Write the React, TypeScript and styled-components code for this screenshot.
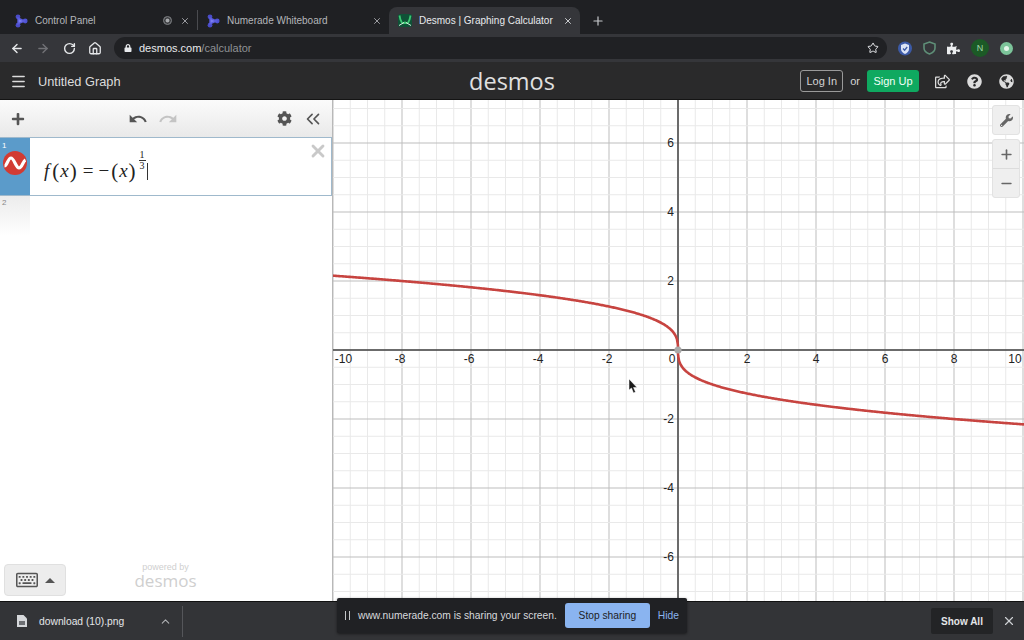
import React from 'react';
import styled, { createGlobalStyle } from 'styled-components';
import { ChevronUp, Home, Menu, Plus, RotateCw, Star, X, ArrowLeft, ArrowRight, ChevronsLeft, Minus } from 'lucide-react';
import {
  FaCog,
  FaGlobeAmericas,
  FaLock,
  FaPlus,
  FaPuzzlePiece,
  FaQuestionCircle,
  FaRegKeyboard,
  FaRegShareSquare,
  FaWrench,
} from 'react-icons/fa';
import { MdRedo, MdUndo } from 'react-icons/md';

const GlobalStyle = createGlobalStyle`
  html, body {
    margin: 0;
    padding: 0;
    height: 640px;
    overflow: hidden;
    font-family: "Liberation Sans", Arial, sans-serif;
  }
`;

const Page = styled.div`
  position: relative;
  width: 1024px;
  height: 640px;
  display: flex;
  flex-direction: column;
  overflow: hidden;
  background: #fff;
`;

/* browser chrome */
const TabStrip = styled.div`
  height: 34px;
  flex: none;
  background: #1f2023;
  display: flex;
  align-items: flex-end;
  padding-left: 6px;
`;

const Tab = styled.div<{ $active?: boolean; $width: number }>`
  width: ${(p) => p.$width}px;
  height: 27px;
  flex: none;
  box-sizing: border-box;
  display: flex;
  align-items: center;
  gap: 7px;
  padding: 0 7px 0 9px;
  border-radius: 8px 8px 0 0;
  background: ${(p) => (p.$active ? '#35363a' : 'transparent')};
  color: ${(p) => (p.$active ? '#e8eaed' : '#b4b6ba')};
  font-size: 10px;
  white-space: nowrap;
`;

const TabTitle = styled.span`
  flex: 1;
  overflow: hidden;
`;

const TabDivider = styled.div`
  width: 1px;
  height: 20px;
  margin: 0 0 4px 0;
  background: #4a4b4f;
  flex: none;
`;

const NewTab = styled.div`
  height: 27px;
  margin-left: 11px;
  display: flex;
  align-items: center;
  color: #c8cacd;
`;

const RecordDot = styled.div`
  width: 9px;
  height: 9px;
  border-radius: 50%;
  background: #a8aaad;
  border: 1px solid #6c6e72;
  box-sizing: border-box;
  box-shadow: inset 0 0 0 1.5px #3a3b3e;
  margin-right: 1px;
`;

const BrowserBar = styled.div`
  height: 28px;
  flex: none;
  background: #35363a;
  display: flex;
  align-items: center;
  padding-left: 10px;
  color: #d5d7da;
`;

const NavButton = styled.div<{ $dim?: boolean; $gap?: number }>`
  width: 14px;
  display: flex;
  justify-content: center;
  margin-right: ${(p) => p.$gap ?? 12}px;
  color: ${(p) => (p.$dim ? '#717276' : '#e6e8ea')};
`;

const AddressBar = styled.div`
  width: 773px;
  height: 22px;
  margin-left: 1px;
  box-sizing: border-box;
  border-radius: 11px;
  background: #202124;
  display: flex;
  align-items: center;
  padding: 0 8px 0 10px;
  font-size: 11px;
  color: #e8eaed;
  gap: 7px;
`;

const Url = styled.span`
  flex: 1;
`;

const UrlPath = styled.span`
  color: #8f9195;
`;

const Extensions = styled.div`
  display: flex;
  align-items: center;
  gap: 11px;
  margin-left: 11px;
  color: #eceef0;
`;

const ProfileBadge = styled.div`
  width: 18px;
  height: 18px;
  border-radius: 50%;
  background: #1c5a26;
  color: #9fd8a6;
  font-size: 9px;
  display: flex;
  align-items: center;
  justify-content: center;
`;

const UpdateDot = styled.div`
  width: 13px;
  height: 13px;
  border-radius: 50%;
  background: #7cc49a;
  display: flex;
  align-items: center;
  justify-content: center;
  &::after {
    content: '';
    width: 5px;
    height: 5px;
    border-radius: 50%;
    background: #e4f5ea;
  }
`;

/* desmos header */
const Header = styled.header`
  height: 38px;
  flex: none;
  box-sizing: border-box;
  background: #2a2a2b;
  border-bottom: 1px solid #141414;
  display: grid;
  grid-template-columns: 1fr auto 1fr;
  align-items: center;
  padding: 0 10px;
  color: #f0f0f0;
`;

const HeaderLeft = styled.div`
  display: flex;
  align-items: center;
  gap: 11px;
  font-size: 12.8px;
  color: #dcdcdc;
`;

const Logo = styled.div`
  font-family: "Open Sans", sans-serif;
  font-weight: 400;
  font-size: 23.5px;
  line-height: 38px;
  color: #e0e0e0;
`;

const HeaderRight = styled.div`
  display: flex;
  align-items: center;
  justify-content: flex-end;
  font-size: 11px;
  color: #d4d4d4;
`;

const LoginButton = styled.div`
  box-sizing: border-box;
  width: 43px;
  height: 22px;
  border: 1px solid #9a9a9a;
  border-radius: 3px;
  display: flex;
  align-items: center;
  justify-content: center;
`;

const OrLabel = styled.span`
  margin: 0 7px;
`;

const SignupButton = styled.div`
  width: 52px;
  height: 22px;
  border-radius: 3px;
  background: #0fa960;
  color: #f2fff8;
  display: flex;
  align-items: center;
  justify-content: center;
  margin-right: 16px;
`;

const HeaderIcons = styled.div`
  display: flex;
  align-items: center;
  gap: 17px;
  color: #dcdcdc;
`;

/* main area */
const Main = styled.main`
  flex: 1;
  min-height: 0;
  display: flex;
`;

const Sidebar = styled.aside`
  position: relative;
  width: 333px;
  flex: none;
  box-sizing: border-box;
  border-right: 1px solid #b8b8b8;
  background: #fff;
  display: flex;
  flex-direction: column;
`;

const ListToolbar = styled.div`
  height: 37px;
  flex: none;
  box-sizing: border-box;
  padding: 0 8px 0 11px;
  background: linear-gradient(#fbfbfb, #e9e9e9);
  display: grid;
  grid-template-columns: 1fr auto 1fr;
  align-items: center;
  color: #555;
`;

const UndoGroup = styled.div`
  display: flex;
  gap: 10px;
  margin-right: 30px;
`;

const RedoIcon = styled(MdRedo)`
  color: #c4c4c4;
`;

const ToolbarEnd = styled.div`
  display: flex;
  justify-content: flex-end;
  align-items: center;
  gap: 10px;
`;

const ExpressionRow = styled.div`
  height: 59px;
  flex: none;
  box-sizing: border-box;
  border: 1px solid #9fb9cc;
  border-left: none;
  display: flex;
  position: relative;
`;

const RowTab = styled.div`
  width: 30px;
  flex: none;
  box-sizing: border-box;
  background: #5b9bca;
  color: #fff;
  font-size: 8px;
  padding: 3px 0 0 2px;
  display: flex;
  flex-direction: column;
`;

const GraphIcon = styled.svg`
  margin: 1px 0 0 0px;
`;

const MathLine = styled.div`
  margin: 11px 0 0 14px;
  display: flex;
  align-items: center;
  font-family: "Liberation Serif", "DejaVu Serif", serif;
  font-size: 19px;
  color: #222;
  height: 44px;
`;

const Var = styled.i<{ $left?: number; $right?: number }>`
  margin: 0 ${(p) => p.$right ?? 1}px 0 ${(p) => p.$left ?? 1}px;
`;

const Paren = styled.span`
  font-size: 21px;
  font-weight: 300;
`;

const Operator = styled.span<{ $left?: number; $right?: number }>`
  margin: 0 ${(p) => p.$right ?? 0}px 0 ${(p) => p.$left ?? 0}px;
`;

const Fraction = styled.span`
  display: inline-flex;
  flex-direction: column;
  align-items: center;
  font-size: 10px;
  line-height: 10px;
  margin: -22px 0 0 3px;
`;

const FractionTop = styled.span`
  border-bottom: 1px solid #333;
  padding: 0 1px;
`;

const Caret = styled.span`
  width: 1px;
  height: 17px;
  background: #333;
  margin-left: 1px;
`;

const RemoveButton = styled.div`
  position: absolute;
  top: 3px;
  right: 3px;
  color: #c9c9c9;
  display: flex;
`;

const EmptyRow = styled.div`
  width: 30px;
  height: 40px;
  flex: none;
  box-sizing: border-box;
  padding: 2px 0 0 2px;
  font-size: 8px;
  color: #888;
  background: linear-gradient(#ececec, #fff);
`;

const KeyboardButton = styled.div`
  position: absolute;
  left: 4px;
  bottom: 5px;
  width: 62px;
  height: 32px;
  box-sizing: border-box;
  background: #ededed;
  border: 1px solid #e0e0e0;
  border-radius: 4px;
  display: flex;
  align-items: center;
  justify-content: center;
  gap: 7px;
  color: #555;
`;

const CaretUp = styled.div`
  width: 0;
  height: 0;
  border-left: 5px solid transparent;
  border-right: 5px solid transparent;
  border-bottom: 5px solid #555;
`;

const PoweredBy = styled.div`
  position: absolute;
  left: 133px;
  bottom: 11px;
  width: 65px;
  display: flex;
  flex-direction: column;
  align-items: center;
  color: #cfcfcf;
`;

const PoweredLabel = styled.span`
  font-size: 9px;
  line-height: 9px;
`;

const PoweredLogo = styled.span`
  font-family: "Open Sans", sans-serif;
  font-weight: 400;
  font-size: 17px;
  line-height: 18px;
`;

/* graph */
const GraphPane = styled.section`
  position: relative;
  flex: 1;
  min-width: 0;
  overflow: hidden;
  background: #fff;
`;

const GraphSvg = styled.svg`
  display: block;
`;

const AxisLabel = styled.text`
  font-family: "Liberation Sans", Arial, sans-serif;
  font-size: 12px;
  fill: #222;
`;

const GraphControls = styled.div`
  position: absolute;
  top: 5px;
  right: 4px;
  width: 28px;
  display: flex;
  flex-direction: column;
  gap: 4px;
  color: #666;
`;

const ControlGroup = styled.div`
  background: #efefef;
  border: 1px solid #e2e2e2;
  border-radius: 3px;
  display: flex;
  flex-direction: column;
`;

const ControlButton = styled.div<{ $divider?: boolean }>`
  height: 28px;
  display: flex;
  align-items: center;
  justify-content: center;
  border-top: ${(p) => (p.$divider ? '1px solid #dcdcdc' : 'none')};
`;

/* download bar */
const DownloadBar = styled.footer`
  height: 39px;
  flex: none;
  box-sizing: border-box;
  background: #333437;
  border-top: 1px solid #111;
  display: flex;
  align-items: center;
  color: #e4e6e8;
  font-size: 10.3px;
`;

const DownloadItem = styled.div`
  width: 183px;
  height: 31px;
  box-sizing: border-box;
  border-right: 1px solid #55565a;
  display: flex;
  align-items: center;
  padding: 0 10px 0 17px;
`;

const DownloadName = styled.span`
  flex: 1;
  margin-left: 12px;
`;

const DownloadChevron = styled(ChevronUp)`
  color: #b0b2b5;
`;

const ShowAll = styled.div`
  margin-left: auto;
  width: 62px;
  height: 26px;
  background: #232426;
  border-radius: 2px;
  font-weight: 700;
  font-size: 10px;
  display: flex;
  align-items: center;
  justify-content: center;
`;

const CloseDownloads = styled.div`
  margin: 0 8px 0 9px;
  display: flex;
  color: #cfd1d4;
`;

const ShareNotice = styled.div`
  position: absolute;
  left: 337px;
  top: 598px;
  width: 350px;
  height: 35px;
  box-sizing: border-box;
  background: #202124;
  box-shadow: 0 1px 3px rgba(0, 0, 0, 0.5);
  border-radius: 2px;
  display: flex;
  align-items: center;
  padding-left: 8px;
  font-size: 10.25px;
  color: #d8dadd;
  white-space: nowrap;
`;

const PauseMark = styled.span`
  width: 5px;
  height: 9px;
  flex: none;
  box-sizing: border-box;
  border-left: 1px solid #c4c6c9;
  border-right: 1px solid #c4c6c9;
  margin-right: 8px;
`;

const StopButton = styled.div`
  width: 85px;
  height: 25px;
  flex: none;
  margin-left: 8px;
  border-radius: 3px;
  background: #8ab4f0;
  color: #202124;
  display: flex;
  align-items: center;
  justify-content: center;
`;

const HideLink = styled.span`
  margin-left: 8px;
  color: #8ab4f0;
`;

const Cursor = styled.svg`
  position: absolute;
  left: 628px;
  top: 379px;
`;

const NumeradeIcon = () => (
  <svg width="13" height="14" viewBox="0 0 13 14">
    <circle cx="3" cy="2.8" r="2.4" fill="#4a4cc8" />
    <circle cx="3" cy="11.2" r="2.4" fill="#4a4cc8" />
    <circle cx="10.2" cy="7" r="2.4" fill="#4f52d4" />
    <path d="M3 4 L9.5 7 L3 10 Z" fill="#7a7cf0" stroke="#5a5cdc" strokeWidth="1.4" />
  </svg>
);

const DesmosFavicon = () => (
  <svg width="14" height="13" viewBox="0 0 14 13" fill="none">
    <rect width="14" height="13" rx="2" fill="#0f5237" />
    <path d="M1.5 1.5 C2.5 8 4.5 10.5 7 8.5 C9.5 10.5 11.5 8 12.5 1.5" stroke="#3cc873" strokeWidth="1.8" />
    <path d="M1 11.5 L6 8.5 M13 11.5 L8 8.5" stroke="#d8f2df" strokeWidth="1" />
  </svg>
);

const ShieldBlue = () => (
  <svg width="14" height="15" viewBox="0 0 14 15">
    <circle cx="7" cy="7.5" r="7" fill="#3c5aa6" />
    <path d="M7 2.5 L11 4 V8 C11 10.5 9 12 7 13 C5 12 3 10.5 3 8 V4 Z" fill="#dbe4f7" />
    <path d="M5 7.5 L6.6 9.2 L9.2 6" stroke="#3c5aa6" strokeWidth="1.3" fill="none" />
  </svg>
);

const ShieldOutline = () => (
  <svg width="13" height="14" viewBox="0 0 13 14" fill="none">
    <path d="M6.5 1 L12 3 V7 C12 10 9.5 12 6.5 13 C3.5 12 1 10 1 7 V3 Z" stroke="#5f8f78" strokeWidth="1.6" />
  </svg>
);

// major lines every 2 units, minor every half unit
const SCALE = 34.5;
const W = 691;
const H = 501;
const OX = 345;
const OY = 250;

const gridPositions = (origin: number, size: number, step: number) => {
  const out: { pos: number; index: number }[] = [];
  const start = Math.ceil(-origin / step);
  const end = Math.floor((size - origin) / step);
  for (let i = start; i <= end; i++) out.push({ pos: origin + i * step, index: i });
  return out;
};

const curvePath = () => {
  const pts: string[] = [];
  for (let px = 0; px <= W; px += 1) {
    const x = (px - OX) / SCALE;
    const y = -Math.cbrt(x);
    pts.push(`${px},${(OY - y * SCALE).toFixed(2)}`);
  }
  // the cube root is near vertical at the origin
  const near = [-0.004, -0.001, -0.0002, 0, 0.0002, 0.001, 0.004].map(
    (x) => `${(OX + x * SCALE).toFixed(2)},${(OY + Math.cbrt(x) * SCALE).toFixed(2)}`,
  );
  const left = pts.slice(0, OX);
  const right = pts.slice(OX + 1);
  return `M${[...left, ...near, ...right].join(' L')}`;
};

// labels at the pane edges are pulled inside, minus signs hang to the left
const xLabelPos = (v: number) => {
  if (v === -10) return 10.5;
  if (v === 10) return 682;
  return OX + v * SCALE - (v < 0 ? 2 : 0);
};

const Graph = () => {
  const xs = gridPositions(OX, W, SCALE / 2);
  const ys = gridPositions(OY, H, SCALE / 2);
  const xLabels = [-10, -8, -6, -4, -2, 2, 4, 6, 8, 10];
  const yLabels = [6, 4, 2, -2, -4, -6];

  return (
    <GraphSvg width={W} height={H} viewBox={`0 0 ${W} ${H}`}>
      {xs.map(({ pos, index }) => (
        <line
          key={`x${index}`}
          x1={pos}
          x2={pos}
          y1={0}
          y2={H}
          stroke={index % 4 === 0 ? '#bdbdbd' : '#e9e9e9'}
          strokeWidth={1}
        />
      ))}
      {ys.map(({ pos, index }) => (
        <line
          key={`y${index}`}
          x1={0}
          x2={W}
          y1={pos}
          y2={pos}
          stroke={index % 4 === 0 ? '#bdbdbd' : '#e9e9e9'}
          strokeWidth={1}
        />
      ))}
      <line x1={OX} x2={OX} y1={0} y2={H} stroke="#444" strokeWidth={1.5} />
      <line x1={0} x2={W} y1={OY} y2={OY} stroke="#444" strokeWidth={1.5} />
      <path d={curvePath()} fill="none" stroke="#c74440" strokeWidth={2.6} />
      <circle cx={OX} cy={OY} r={3.6} fill="#a9a9a9" />
      {xLabels.map((v) => (
        <AxisLabel key={v} x={xLabelPos(v)} y={OY + 13} textAnchor="middle">
          {v}
        </AxisLabel>
      ))}
      <AxisLabel x={OX - 6} y={OY + 13} textAnchor="middle">
        0
      </AxisLabel>
      {yLabels.map((v) => (
        <AxisLabel key={v} x={OX - 4} y={OY - v * SCALE + 4} textAnchor="end">
          {v}
        </AxisLabel>
      ))}
    </GraphSvg>
  );
};

export default function App() {
  return (
    <Page>
      <GlobalStyle />
      <TabStrip>
        <Tab $width={191}>
          <NumeradeIcon />
          <TabTitle>Control Panel</TabTitle>
          <RecordDot />
          <X size={10} />
        </Tab>
        <TabDivider />
        <Tab $width={191}>
          <NumeradeIcon />
          <TabTitle>Numerade Whiteboard</TabTitle>
          <X size={10} />
        </Tab>
        <Tab $active $width={191}>
          <DesmosFavicon />
          <TabTitle>Desmos | Graphing Calculator</TabTitle>
          <X size={10} />
        </Tab>
        <NewTab>
          <Plus size={14} />
        </NewTab>
      </TabStrip>

      <BrowserBar>
        <NavButton>
          <ArrowLeft size={15} strokeWidth={2.4} />
        </NavButton>
        <NavButton $dim>
          <ArrowRight size={15} strokeWidth={2.4} />
        </NavButton>
        <NavButton>
          <RotateCw size={13} strokeWidth={2.6} />
        </NavButton>
        <NavButton $gap={11}>
          <Home size={15} strokeWidth={2.2} />
        </NavButton>
        <AddressBar>
          <FaLock size={8} />
          <Url>
            desmos.com<UrlPath>/calculator</UrlPath>
          </Url>
          <Star size={12} />
        </AddressBar>
        <Extensions>
          <ShieldBlue />
          <ShieldOutline />
          <FaPuzzlePiece size={13} />
          <ProfileBadge>N</ProfileBadge>
          <UpdateDot />
        </Extensions>
      </BrowserBar>

      <Header>
        <HeaderLeft>
          <Menu size={17} />
          <span>Untitled Graph</span>
        </HeaderLeft>
        <Logo>desmos</Logo>
        <HeaderRight>
          <LoginButton>Log In</LoginButton>
          <OrLabel>or</OrLabel>
          <SignupButton>Sign Up</SignupButton>
          <HeaderIcons>
            <FaRegShareSquare size={15} />
            <FaQuestionCircle size={15} />
            <FaGlobeAmericas size={15} />
          </HeaderIcons>
        </HeaderRight>
      </Header>

      <Main>
        <Sidebar>
          <ListToolbar>
            <FaPlus size={14} />
            <UndoGroup>
              <MdUndo size={20} />
              <RedoIcon size={20} />
            </UndoGroup>
            <ToolbarEnd>
              <FaCog size={15} />
              <ChevronsLeft size={22} strokeWidth={1.8} />
            </ToolbarEnd>
          </ListToolbar>

          <ExpressionRow>
            <RowTab>
              1
              <GraphIcon width="26" height="26" viewBox="0 0 26 26" fill="none">
                <circle cx="13" cy="12" r="12" fill="#d23b33" />
                <path
                  d="M2.5 15 C5 15 6 7 9 7 C12 7 14 17 17 17 C20 17 21 10 23.5 9"
                  stroke="#fff"
                  strokeWidth="3.2"
                  fill="none"
                />
              </GraphIcon>
            </RowTab>
            <MathLine>
              <Var $left={0} $right={3}>f</Var>
              <Paren>(</Paren>
              <Var $left={1} $right={1}>x</Var>
              <Paren>)</Paren>
              <Operator $left={6} $right={5}>=</Operator>
              <Operator $right={2}>−</Operator>
              <Paren>(</Paren>
              <Var $left={1} $right={1}>x</Var>
              <Paren>)</Paren>
              <Fraction>
                <FractionTop>1</FractionTop>
                <span>3</span>
              </Fraction>
              <Caret />
            </MathLine>
            <RemoveButton>
              <X size={20} strokeWidth={3.4} />
            </RemoveButton>
          </ExpressionRow>

          <EmptyRow>2</EmptyRow>

          <KeyboardButton>
            <FaRegKeyboard size={22} />
            <CaretUp />
          </KeyboardButton>
          <PoweredBy>
            <PoweredLabel>powered by</PoweredLabel>
            <PoweredLogo>desmos</PoweredLogo>
          </PoweredBy>
        </Sidebar>

        <GraphPane>
          <Graph />
          <GraphControls>
            <ControlGroup>
              <ControlButton>
                <FaWrench size={13} />
              </ControlButton>
            </ControlGroup>
            <ControlGroup>
              <ControlButton>
                <Plus size={15} strokeWidth={2.6} />
              </ControlButton>
              <ControlButton $divider>
                <Minus size={15} strokeWidth={2.6} />
              </ControlButton>
            </ControlGroup>
          </GraphControls>
        </GraphPane>
      </Main>

      <DownloadBar>
        <DownloadItem>
          <svg width="10" height="12" viewBox="0 0 10 12">
            <path d="M0 0 H6.5 L10 3.5 V12 H0 Z" fill="#d6d8db" />
            <rect x="2" y="6" width="6" height="4" fill="#6d6f73" />
          </svg>
          <DownloadName>download (10).png</DownloadName>
          <DownloadChevron size={13} />
        </DownloadItem>
        <ShowAll>Show All</ShowAll>
        <CloseDownloads>
          <X size={14} />
        </CloseDownloads>
      </DownloadBar>

      <ShareNotice>
        <PauseMark />
        www.numerade.com is sharing your screen.
        <StopButton>Stop sharing</StopButton>
        <HideLink>Hide</HideLink>
      </ShareNotice>

      <Cursor width="10" height="15" viewBox="0 0 10 15">
        <path d="M1 0 L1 11 L3.5 9 L5.5 14 L7.5 13 L5.5 8.5 L9 8.5 Z" fill="#1a1a1a" stroke="#fff" strokeWidth="0.5" />
      </Cursor>
    </Page>
  );
}
